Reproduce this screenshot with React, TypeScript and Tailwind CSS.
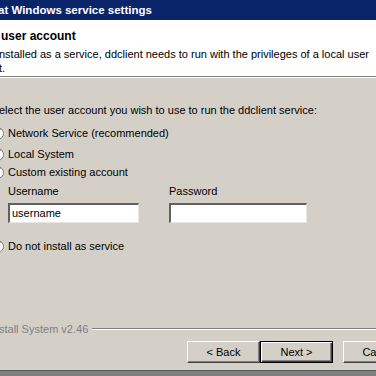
import React from 'react';

const Radio = () => (
  <span className="inline-block shrink-0 w-[13px] h-[13px] rounded-full bg-white border border-[#808080] shadow-[inset_1px_1px_0_#404040]" />
);

export default function App() {
  const font = { fontFamily: '"Liberation Sans", Arial, sans-serif' };
  return (
    <div className="w-[376px] h-[376px] overflow-hidden bg-[#d4d0c8] text-[11px] text-black" style={font}>
      {/* title bar */}
      <div className="h-[20px] bg-[#0a246a] text-white font-bold text-[11.5px] leading-[20px] -ml-[2px] whitespace-nowrap">
        at Windows service settings
      </div>

      {/* header */}
      <div className="h-[56px] bg-white pt-[9px] whitespace-nowrap">
        <div className="font-bold text-[12px] leading-[14px] ml-[1px]">user account</div>
        <div className="mt-[4px] leading-[14px] -ml-[1px]">
          nstalled as a service, ddclient needs to run with the privileges of a local user
        </div>
        <div className="leading-[14px] -ml-[1px]">t.</div>
      </div>
      <div className="h-px bg-[#808080]" />
      <div className="h-px bg-white" />

      {/* body */}
      <div className="h-[292px] flex flex-col pt-[25px] whitespace-nowrap">
        <div className="leading-[14px] -ml-[1px]">elect the user account you wish to use to run the ddclient service:</div>

        <div className="mt-[9px] flex flex-col gap-[5px] -ml-[9px]">
          <label className="flex items-center gap-[4px] h-[14px]"><Radio /><span>Network Service (recommended)</span></label>
          <label className="flex items-center gap-[4px] h-[14px] mt-[2px]"><Radio /><span>Local System</span></label>
          <label className="flex items-center gap-[4px] h-[14px] -mt-[1px]"><Radio /><span>Custom existing account</span></label>
        </div>

        <div className="mt-[5px] flex pl-[8px]">
          <div className="w-[161px]">
            <div className="leading-[14px]">Username</div>
            <div className="mt-[5px] w-[131px] h-[20px] bg-white border-t-2 border-l-2 border-t-[#606060] border-l-[#606060] border-r border-b border-r-[#e8e6e0] border-b-[#e8e6e0] pl-[2px] leading-[16px]">
              username
            </div>
          </div>
          <div>
            <div className="leading-[14px]">Password</div>
            <div className="mt-[5px] w-[138px] h-[20px] bg-white border-t-2 border-l-2 border-t-[#606060] border-l-[#606060] border-r border-b border-r-[#e8e6e0] border-b-[#e8e6e0]" />
          </div>
        </div>

        <label className="mt-[16px] flex items-center gap-[4px] h-[14px] -ml-[9px]"><Radio /><span>Do not install as service</span></label>

        <div className="mt-[69px] h-[14px] flex items-center text-[#808080]">
          <span className="-ml-[1px] leading-[14px]">stall System v2.46</span>
          <div className="flex-1 ml-[4px] flex flex-col">
            <div className="h-px bg-[#808080]" />
            <div className="h-px bg-white" />
          </div>
        </div>

        <div className="mt-[5px] flex pl-[187px]">
          <button className="w-[73px] h-[22px] shrink-0 bg-[#d4d0c8] border-t border-l border-white border-r border-b border-r-[#404040] border-b-[#404040] shadow-[inset_-1px_-1px_0_#808080]">
            &lt; Back
          </button>
          <button className="w-[73px] h-[22px] shrink-0 bg-[#d4d0c8] border border-black shadow-[inset_1px_1px_0_#fff,inset_-1px_-1px_0_#404040,inset_-2px_-2px_0_#808080]">
            Next &gt;
          </button>
          <button className="ml-[10px] w-[73px] h-[22px] shrink-0 bg-[#d4d0c8] border-t border-l border-white border-r border-b border-r-[#404040] border-b-[#404040] shadow-[inset_-1px_-1px_0_#808080]">
            Cancel
          </button>
        </div>
      </div>
      <div className="h-[6px] bg-[#808080] border-t border-[#5a5a5a]" />
    </div>
  );
}
